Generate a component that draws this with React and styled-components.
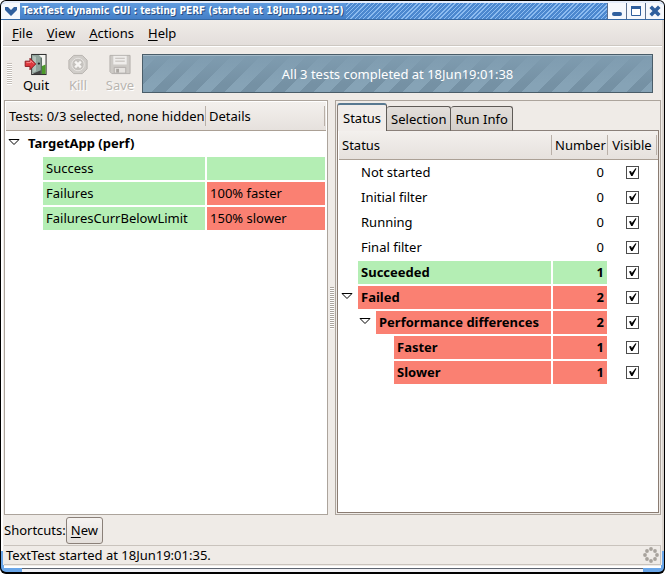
import React, { useState } from "react";
import styled, { createGlobalStyle, css } from "styled-components";

const ui = `"Noto Sans", "Open Sans", sans-serif`;
const green = "#b4eeb4";
const red = "#fa8072";

const GlobalStyle = createGlobalStyle`
  *, *::before, *::after { box-sizing: border-box; }
  body { margin: 0; background: #fff; font: 13px/18px ${ui}; color: #000; }
  button { font: inherit; color: inherit; }
`;

const Window = styled.div`
  display: flex;
  flex-direction: column;
  min-height: 100vh;
  padding: 1px 1px 2px;
  background: #000;
  border-radius: 6px;
`;

const TitleBar = styled.header`
  display: flex;
  height: 19px;
  border-radius: 5px 5px 0 0;
  border-top: 2px solid #e4ecfa;
  border-bottom: 1px solid #3568a4;
  background: linear-gradient(#5f9add, #4580c8);
  overflow: hidden;
`;

const Title = styled.h1`
  margin: 0;
  padding: 0 2px;
  font: bold 10px/15px "DejaVu Sans Condensed", "DejaVu Sans", sans-serif;
  color: #fff;
  text-shadow: 1px 1px 0 #2b4f80;
  white-space: nowrap;
`;

const Hatching = styled.div`
  flex: 1;
  background: repeating-linear-gradient(135deg, #4c88cf 0 2px, #8dbcf0 2px 3px);
`;

const TitleButton = styled.button`
  display: grid;
  place-items: center;
  width: 19px;
  padding: 0;
  border: 0;
  border-left: ${(p) => (p.$first ? "0" : "1px solid #5a6f8f")};
  background: #f6f8fc;
`;

const Body = styled.div`
  flex: 1;
  display: flex;
  flex-direction: column;
  padding: 0 2px;
  background:
    linear-gradient(to top, #6aa6e8 14px, #fff 14px) left / 2px 100% no-repeat,
    linear-gradient(to top, #6aa6e8 14px, #d9d3cd 14px) right / 2px 100% no-repeat,
    #efebe7;
`;

const MenuBar = styled.nav`
  display: flex;
  gap: 4px;
  height: 26px;
  padding: 0 4px;
  border-bottom: 1px solid #cdc8c2;
  background: linear-gradient(#f0ece8, #e3dedb);
`;

const MenuItem = styled.button`
  padding: 2px 5px;
  border: 0;
  background: none;
`;

const Mnemonic = styled.span`
  text-decoration: underline;
  text-underline-offset: 2px;
`;

const ToolBar = styled.div`
  display: flex;
  height: 54px;
  padding: 6px 9px 6px 4px;
  border-top: 1px solid #fff;
`;

const Grip = styled.div`
  align-self: center;
  width: 5px;
  height: 22px;
  margin-right: 3px;
  background: repeating-linear-gradient(#c4beb7 0 1px, #fff 1px 2px);
`;

const ToolButton = styled.button`
  display: flex;
  flex-direction: column;
  align-items: center;
  width: 42px;
  padding: 0;
  border: 0;
  background: none;
  &:disabled { color: #b9b5b0; text-shadow: 1px 1px 0 #fff; }
  svg { display: block; }
`;

const Progress = styled.div`
  flex: 1;
  height: 39px;
  margin: 1px 0 0 1px;
  display: grid;
  place-items: center;
  border: 1px solid #4a5d69;
  box-shadow: inset 0 1px 0 #a3b9c7;
  color: #fff;
  background:
    linear-gradient(#7f9cb0, transparent 80%),
    repeating-linear-gradient(135deg, #86a3b6 0 11px, #7591a4 11px 21px);
`;

const Panes = styled.main`
  flex: 1;
  display: flex;
  margin: 0 1px;
`;

const TestPane = styled.section`
  flex: 324 1 0;
  min-width: 0;
  padding: 1px;
  border: 1px solid #aca49c;
  background: #fff;
`;

const Divider = styled.div`
  width: 7px;
  display: grid;
  place-items: center;
`;

const DividerGrip = styled.div`
  width: 4px;
  height: 42px;
  background: repeating-linear-gradient(#aaa49d 0 1px, #fff 1px 2px);
`;

const Notebook = styled.section`
  flex: 326 1 0;
  min-width: 0;
  display: flex;
  flex-direction: column;
  padding: 2px 1px 1px;
  border: 1px solid #aca49c;
`;

const TabList = styled.div`
  display: flex;
  align-items: flex-end;
  height: 28px;
`;

const Tab = styled.button`
  height: 25px;
  padding: 0 4px;
  border: 1px solid #5f5b57;
  border-left-width: 0;
  border-radius: 3px 3px 0 0;
  border-bottom-color: #8a8079;
  background: linear-gradient(#e2deda, #d4cfca);
  white-space: nowrap;
  ${(p) => p.$active && css`
    height: 28px;
    padding: 0 5px;
    border-left: 1px solid #8a8079;
    border-top: 2px solid #587890;
    border-bottom: 0;
    background: #f1edea;
  `}
`;

const TabFiller = styled.div`
  flex: 1;
  align-self: stretch;
  border-bottom: 1px solid #8a8079;
`;

const TabPanel = styled.div`
  flex: 1;
  padding-left: 1px;
  border: 1px solid #8a7c72;
  border-top: 0;
  background: #fff;
`;

const Tree = styled.table`
  width: 100%;
  table-layout: fixed;
  border-collapse: collapse;
`;

const Column = styled.col`
  width: ${(p) => (p.$width ? p.$width + "px" : "auto")};
`;

const HeaderCell = styled.th`
  height: 28px;
  padding: 0;
  font-weight: normal;
  text-align: ${(p) => p.$align || "left"};
  white-space: nowrap;
  border-bottom: 1px solid #aba095;
  background: linear-gradient(#f3f0ed, #e6e1dd);
  &:last-child { padding-right: 1px; }
`;

const HeaderLabel = styled.div`
  height: 20px;
  line-height: 20px;
  padding: 0 3px;
  border-right: 1px solid #b9b0a8;
`;

const Cell = styled.td`
  height: 25px;
  padding: 1px;
`;

const Branch = styled.div`
  display: flex;
  padding-left: ${(p) => p.$indent}px;
`;

const Expander = styled.button`
  display: grid;
  place-items: center start;
  width: 18px;
  padding: 0 0 2px 1px;
  border: 0;
  background: none;
`;

const Fill = styled.div`
  flex: 1;
  height: 23px;
  padding: 0 3px;
  line-height: 23px;
  white-space: nowrap;
  font-weight: ${(p) => (p.$bold ? "bold" : "normal")};
  text-align: ${(p) => p.$align || "left"};
  background: ${(p) => p.$color || "transparent"};
`;

const CheckLabel = styled.label`
  display: grid;
  place-content: center;
  padding-right: 2px;
  svg { grid-area: 1 / 1; pointer-events: none; visibility: hidden; }
  input:checked + svg { visibility: visible; }
`;

const CheckInput = styled.input`
  grid-area: 1 / 1;
  appearance: none;
  width: 13px;
  height: 13px;
  margin: 0;
  border: 1px solid #4c4c4c;
  background: #fff;
`;

const Shortcuts = styled.div`
  display: flex;
  align-items: center;
  height: 30px;
  padding-left: 1px;
`;

const ShortcutButton = styled.button`
  height: 27px;
  padding: 0 4px;
  border: 1px solid #8a8079;
  border-radius: 3px;
  background: linear-gradient(#f6f3f1, #e4dfdb);
`;

const StatusBar = styled.footer`
  display: flex;
  justify-content: space-between;
  align-items: center;
  height: 20px;
  margin: 0 1px;
  padding: 0 1px 0 2px;
  border: 1px solid #c9c3bd;
  border-left: 0;
`;

const BottomFrame = styled.div`
  height: 7px;
  border-radius: 0 0 5px 5px;
  background:
    linear-gradient(90deg, #6aa6e8 21px, transparent 21px calc(100% - 21px), #6aa6e8 calc(100% - 21px)) 0 3px / 100% 4px no-repeat,
    linear-gradient(90deg, #6aa6e8 3px, transparent 3px calc(100% - 3px), #6aa6e8 calc(100% - 3px)),
    linear-gradient(#efebe7 0 1px, #fff 1px 3px, #5d6470 3px 4px, #f2f2f6 4px);
`;

const Triangle = () => (
  <svg width="12" height="8" viewBox="0 0 12 8"><path d="M1 1.500H11L6 6.500Z" fill="#fff" stroke="#000" /></svg>
);

const ChevronIcon = () => (
  <svg width="14" height="12" viewBox="0 0 14 12"><path d="M1 2h3l3 3 3-3h3v3L7 11 1 5Z" fill="#2f5f9e" /></svg>
);
const MinimizeIcon = () => (
  <svg width="12" height="12" viewBox="0 0 12 12"><rect x="1" y="7" width="10" height="4" rx="2" fill="#2f5f9e" /></svg>
);
const MaximizeIcon = () => (
  <svg width="12" height="12" viewBox="0 0 12 12"><path d="M1.500 2.500h9v8h-9Z" fill="#fff" stroke="#2f5f9e" /><path d="M1 1h10v3H1Z" fill="#2f5f9e" /></svg>
);
const CloseIcon = () => (
  <svg width="12" height="12" viewBox="0 0 12 12"><path d="M3 3l6 6M9 3L3 9" stroke="#2f5f9e" strokeWidth="3.600" strokeLinecap="square" /></svg>
);

const QuitIcon = () => (
  <svg width="24" height="24" viewBox="0 0 24 24">
    <rect x="7.500" y="1.500" width="15" height="21" fill="#f4f4f0" stroke="#222" />
    <path d="M17 14l5-2v10h-5Z" fill="#4c9a2a" />
    <path d="M8 2h7l3 3v17l-10-1Z" fill="#8fa39b" />
    <path d="M9 3l3 1v15l-3 1Z" fill="#b4c3bc" />
    <path d="M8 22L17 18v4Z" fill="#444" />
    <path d="M17.500 5v17" stroke="#46594f" />
    <circle cx="15" cy="11" r="1.200" fill="#222" />
    <path d="M.7 8.500h5V5.500l6 6-6 6v-3.500h-5Z" fill="#e0383e" stroke="#8a1a20" />
    <path d="M2 10h4.500V8l3 3" fill="none" stroke="#f79090" />
  </svg>
);
const KillIcon = () => (
  <svg width="24" height="24" viewBox="0 0 24 24">
    <path d="M7.500 2.500h9l5 5v9l-5 5h-9l-5-5v-9Z" fill="#d0cdc9" stroke="#b6b2ae" />
    <circle cx="12" cy="12" r="6.500" fill="#c5c2be" stroke="#e9e6e3" />
    <path d="M9 9l6 6M15 9l-6 6" stroke="#f7f5f3" strokeWidth="2.500" />
  </svg>
);
const SaveIcon = () => (
  <svg width="24" height="24" viewBox="0 0 24 24">
    <path d="M1.500 2.500h21v19h-19l-2-2Z" fill="#cdcac6" stroke="#b4b0ac" />
    <path d="M5 3h14v9H5Z" fill="#efedeb" />
    <path d="M7 5.500h10M7 8.500h10" stroke="#bcb8b4" />
    <path d="M6 15h12v6H6Z" fill="#e6e3e0" stroke="#b2aeaa" />
    <path d="M8 16.500h3v4H8Z" fill="#aaa6a2" />
  </svg>
);
const TickIcon = () => (
  <svg width="13" height="13" viewBox="0 0 13 13"><path d="M3 5.500l2-.5.8 2L9.500 2.200l1 .3L6.500 10H5.200Z" fill="#000" /></svg>
);
const ThrobberIcon = () => (
  <svg width="16" height="16" viewBox="0 0 16 16" fill="#a8a39d">
    {[[8, 2], [12, 4], [14, 8], [12, 12], [8, 14], [4, 12], [2, 8], [4, 4]].map(([x, y]) => (
      <circle key={x + "-" + y} cx={x} cy={y} r="1.900" />
    ))}
  </svg>
);

const menus = ["File", "View", "Actions", "Help"];

const tests = [
  { name: "Success", details: "", color: green },
  { name: "Failures", details: "100% faster", color: red },
  { name: "FailuresCurrBelowLimit", details: "150% slower", color: red },
];

const statuses = [
  { name: "Not started", count: 0, indent: 18 },
  { name: "Initial filter", count: 0, indent: 18 },
  { name: "Running", count: 0, indent: 18 },
  { name: "Final filter", count: 0, indent: 18 },
  { name: "Succeeded", count: 1, indent: 18, color: green, bold: true },
  { name: "Failed", count: 2, indent: 0, color: red, bold: true, parent: true },
  { name: "Performance differences", count: 2, indent: 18, color: red, bold: true, parent: true },
  { name: "Faster", count: 1, indent: 54, color: red, bold: true },
  { name: "Slower", count: 1, indent: 54, color: red, bold: true },
];

function TestTree() {
  return (
    <Tree>
      <colgroup><Column /><Column $width={120} /></colgroup>
      <thead>
        <tr>
          <HeaderCell><HeaderLabel>Tests: 0/3 selected, none hidden</HeaderLabel></HeaderCell>
          <HeaderCell><HeaderLabel>Details</HeaderLabel></HeaderCell>
        </tr>
      </thead>
      <tbody>
        <tr>
          <Cell colSpan={2}>
            <Branch $indent={0}>
              <Expander aria-label="Collapse TargetApp"><Triangle /></Expander>
              <Fill $bold>TargetApp (perf)</Fill>
            </Branch>
          </Cell>
        </tr>
        {tests.map((t) => (
          <tr key={t.name}>
            <Cell><Branch $indent={36}><Fill $color={green}>{t.name}</Fill></Branch></Cell>
            <Cell><Fill $color={t.color}>{t.details}</Fill></Cell>
          </tr>
        ))}
      </tbody>
    </Tree>
  );
}

function StatusTree() {
  return (
    <Tree>
      <colgroup><Column /><Column $width={56} /><Column $width={50} /></colgroup>
      <thead>
        <tr>
          <HeaderCell><HeaderLabel>Status</HeaderLabel></HeaderCell>
          <HeaderCell><HeaderLabel>Number</HeaderLabel></HeaderCell>
          <HeaderCell $align="center"><HeaderLabel>Visible</HeaderLabel></HeaderCell>
        </tr>
      </thead>
      <tbody>
        {statuses.map((s) => (
          <tr key={s.name}>
            <Cell>
              <Branch $indent={s.indent}>
                {s.parent && <Expander aria-label={"Collapse " + s.name}><Triangle /></Expander>}
                <Fill $color={s.color} $bold={s.bold}>{s.name}</Fill>
              </Branch>
            </Cell>
            <Cell><Fill $color={s.color} $bold={s.bold} $align="right">{s.count}</Fill></Cell>
            <Cell>
              <CheckLabel>
                <CheckInput type="checkbox" defaultChecked aria-label={"Show " + s.name} />
                <TickIcon />
              </CheckLabel>
            </Cell>
          </tr>
        ))}
      </tbody>
    </Tree>
  );
}

export default function App() {
  const [tab, setTab] = useState("Status");
  return (
    <Window>
      <GlobalStyle />
      <TitleBar>
        <TitleButton $first aria-label="Window menu"><ChevronIcon /></TitleButton>
        <Title>TextTest dynamic GUI : testing PERF (started at 18Jun19:01:35)</Title>
        <Hatching />
        <TitleButton aria-label="Minimize"><MinimizeIcon /></TitleButton>
        <TitleButton aria-label="Maximize"><MaximizeIcon /></TitleButton>
        <TitleButton aria-label="Close"><CloseIcon /></TitleButton>
      </TitleBar>
      <Body>
        <MenuBar>
          {menus.map((m) => (
            <MenuItem key={m}><Mnemonic>{m[0]}</Mnemonic>{m.slice(1)}</MenuItem>
          ))}
        </MenuBar>
        <ToolBar>
          <Grip />
          <ToolButton><QuitIcon />Quit</ToolButton>
          <ToolButton disabled><KillIcon />Kill</ToolButton>
          <ToolButton disabled><SaveIcon />Save</ToolButton>
          <Progress role="progressbar" aria-label="Test progress" aria-valuenow={100}>
            All 3 tests completed at 18Jun19:01:38
          </Progress>
        </ToolBar>
        <Panes>
          <TestPane><TestTree /></TestPane>
          <Divider><DividerGrip /></Divider>
          <Notebook>
            <TabList role="tablist">
              {["Status", "Selection", "Run Info"].map((t) => (
                <Tab key={t} role="tab" aria-selected={t === tab} $active={t === tab} onClick={() => setTab(t)}>{t}</Tab>
              ))}
              <TabFiller />
            </TabList>
            <TabPanel role="tabpanel">{tab === "Status" && <StatusTree />}</TabPanel>
          </Notebook>
        </Panes>
        <Shortcuts>
          Shortcuts:
          <ShortcutButton><Mnemonic>N</Mnemonic>ew</ShortcutButton>
        </Shortcuts>
        <StatusBar>
          TextTest started at 18Jun19:01:35.
          <ThrobberIcon />
        </StatusBar>
      </Body>
      <BottomFrame />
    </Window>
  );
}
